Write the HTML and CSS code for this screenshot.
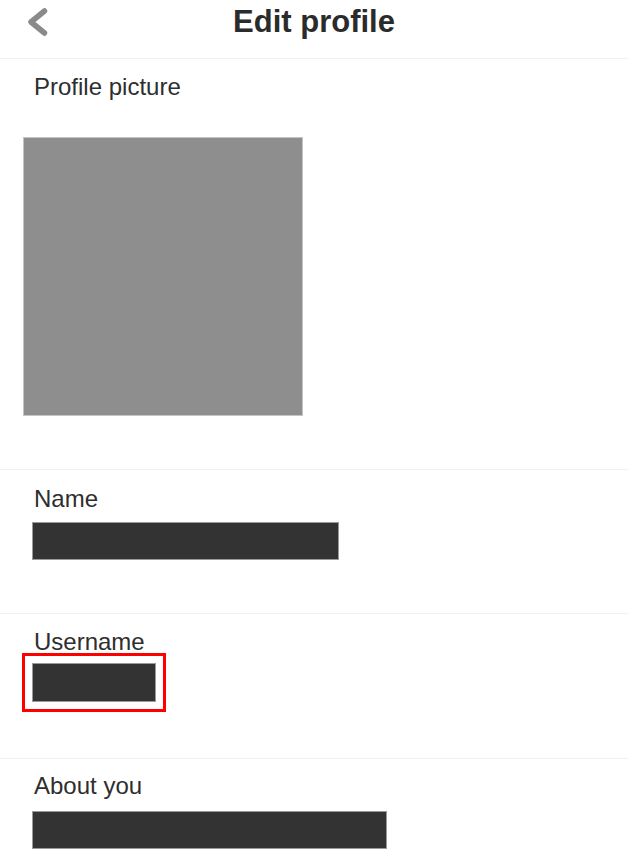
FILE: index.html
```html
<!DOCTYPE html>
<html>
<head>
<meta charset="utf-8">
<link rel="stylesheet" href="styles.css">
</head>
<body>
<div class="header">
  <div class="back">
    <svg width="30" height="40" viewBox="0 0 30 40"><path d="M22.5 9 L9 20 L22.5 31" fill="none" stroke="#8a8a8a" stroke-width="5.5" stroke-linecap="round" stroke-linejoin="round"/></svg>
  </div>
  <div class="title">Edit profile</div>
  <div></div>
</div>
<div class="section pic">
  <div class="label">Profile picture</div>
  <div class="avatar"></div>
</div>
<div class="section name">
  <div class="label">Name</div>
  <div class="bar bar-name"></div>
</div>
<div class="section user">
  <div class="label">Username</div>
  <div class="bar bar-user"></div>
</div>
<div class="section about">
  <div class="label">About you</div>
  <div class="bar bar-about"></div>
</div>
</body>
</html>
```
FILE: styles.css
```css
html, body {
  margin: 0;
  padding: 0;
  background: #fff;
  font-family: "Liberation Sans", Arial, sans-serif;
  color: #2e2e2e;
  overflow: hidden;
}
.header {
  display: grid;
  grid-template-columns: 1fr auto 1fr;
  height: 56px;
  padding-top: 2px;
  border-bottom: 1px solid #f1f1f1;
}
.back {
  padding-left: 22px;
  height: 40px;
}
.back svg { display: block; }
.title {
  font-size: 31px;
  font-weight: bold;
  line-height: 40px;
  color: #2b2b2b;
}
.section {
  border-bottom: 1px solid #f1f1f1;
  display: flex;
  flex-direction: column;
  align-items: flex-start;
}
.label {
  font-size: 24px;
  line-height: 28px;
  padding-left: 34px;
  color: #2e2e2e;
}
.pic { padding: 14px 0 53px; }
.avatar {
  width: 278px;
  height: 277px;
  margin: 36px 0 0 23px;
  background: #8e8e8e;
  border: 1px solid #c4c4c4;
}
.bar {
  background: #333;
  border: 1px solid #9a9a9a;
  box-sizing: border-box;
  margin-left: 32px;
}
.name { padding: 15px 0 53px; }
.bar-name { width: 307px; height: 38px; margin-top: 9px; }
.user { padding: 14px 0 56px; }
.bar-user {
  width: 124px;
  height: 39px;
  margin-top: 7px;
  outline: 3px solid #f00;
  outline-offset: 7px;
}
.about { padding: 13px 0 40px; border-bottom: none; }
.bar-about { width: 355px; height: 38px; margin-top: 11px; }
```
